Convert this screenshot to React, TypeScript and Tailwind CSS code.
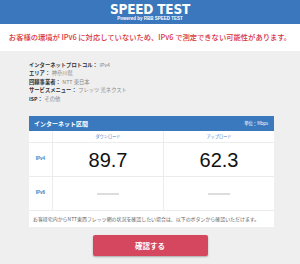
import React from "react";

const jp = "font-['Noto_Sans_CJK_JP','Noto_Sans',sans-serif]";

export default function App() {
  const info: [string, string][] = [
    ["インターネットプロトコル：", "IPv4"],
    ["エリア：", "神奈川県"],
    ["回線事業者：", "NTT 東日本"],
    ["サービスメニュー：", "フレッツ 光ネクスト"],
    ["ISP：", "その他"],
  ];
  return (
    <div className={`w-[300px] h-[264px] bg-[#efefef] overflow-hidden ${jp}`}>
      <header className="h-[24px] bg-[#3a77bc] flex flex-col items-center pt-[3px]">
        <div className="text-white font-bold text-[13.5px] leading-[12px] tracking-[-0.2px] font-['Liberation_Sans_Narrow','DejaVu_Sans_Condensed',sans-serif]">
          SPEED TEST
        </div>
        <div className="text-white font-bold text-[4.5px] leading-[5px] mt-[1px] font-['Liberation_Sans',sans-serif]">
          Powered by RBB SPEED TEST
        </div>
      </header>
      <div className="h-[27px] bg-white flex items-center justify-center text-[#d9353d] text-[7.3px] font-medium whitespace-nowrap">
        お客様の環境が IPv6 に対応していないため、IPv6 で測定できない可能性があります。
      </div>
      <div className="pl-[29px] pt-[10px] text-[5.3px] leading-[8.4px]">
        {info.map(([k, v]) => (
          <div key={k} className="whitespace-nowrap">
            <span className="font-bold text-[#333]">{k}</span>
            <span className="text-[#888] ml-[1.5px]">{v}</span>
          </div>
        ))}
      </div>
      <div className="ml-[29px] mt-[13px] w-[245px] bg-white">
        <div className="h-[15px] bg-[#3b79bf] flex items-center justify-between pl-[5px] pr-[6px] text-white">
          <span className="text-[6px] font-bold">インターネット区間</span>
          <span className="text-[4.3px]">単位：Mbps</span>
        </div>
        <div className="grid grid-cols-[24px_111px_110px]">
          <div className="h-[12px] border-b border-r border-[#ececec]" />
          <div className="h-[12px] border-b border-r border-[#ececec] flex items-center justify-center text-[4.2px] text-[#3b79bf]">
            ダウンロード
          </div>
          <div className="h-[12px] border-b border-[#ececec] flex items-center justify-center text-[4.2px] text-[#3b79bf]">
            アップロード
          </div>

          <div className="h-[34px] border-b border-r border-[#ececec] flex items-center justify-center text-[4.5px] font-bold text-[#3b79bf] font-['Liberation_Sans',sans-serif]">
            IPv4
          </div>
          <div className="h-[34px] border-b border-r border-[#ececec] flex items-center justify-center text-[20px] text-[#111] font-['Liberation_Sans',sans-serif]">
            89.7
          </div>
          <div className="h-[34px] border-b border-[#ececec] flex items-center justify-center text-[20px] text-[#111] font-['Liberation_Sans',sans-serif]">
            62.3
          </div>

          <div className="h-[34px] border-b border-r border-[#ececec] flex items-center justify-center text-[4.5px] font-bold text-[#3b79bf] font-['Liberation_Sans',sans-serif]">
            IPv6
          </div>
          <div className="h-[34px] border-b border-r border-[#ececec] flex items-center justify-center">
            <div className="w-[22px] h-[2px] bg-[#dddddd]" />
          </div>
          <div className="h-[34px] border-b border-[#ececec] flex items-center justify-center">
            <div className="w-[22px] h-[2px] bg-[#dddddd]" />
          </div>
        </div>
        <div className="h-[16px] flex items-center pl-[4px] text-[4.95px] text-[#666] whitespace-nowrap">
          お客様宅内からNTT東西フレッツ網の状況を確認したい場合は、以下のボタンから確認いただけます。
        </div>
      </div>
      <div className="flex justify-center mt-[8px]">
        <button className="w-[115px] h-[21px] rounded-[2px] bg-[#d5475e] text-white text-[7.5px] font-bold shadow-[0_1px_2px_rgba(0,0,0,0.3)]">
          確認する
        </button>
      </div>
    </div>
  );
}
